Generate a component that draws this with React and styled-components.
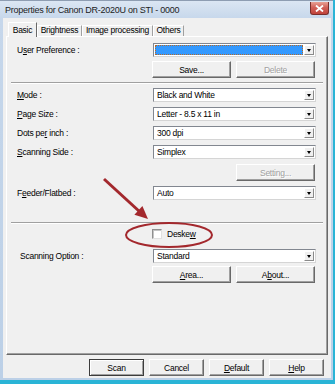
import React from 'react';
import styled, { createGlobalStyle } from 'styled-components';

const GlobalStyle = createGlobalStyle`
	html, body {
		margin: 0;
		padding: 0;
		background: #2ab4d6;
	}
	body {
		font-family: "Liberation Sans", Arial, sans-serif;
	}
`;

const Screen = styled.div`
	position: relative;
	width: 335px;
	height: 384px;
	overflow: hidden;
	background: #2ab4d6;
`;

const Window = styled.div`
	width: 333px;
	height: 380px;
	box-sizing: border-box;
	display: flex;
	flex-direction: column;
	background: linear-gradient(#dbe6f3, #c6d7eb 18px, #bcd0e7);
	border-top: 1px solid #8e9db2;
	padding: 0 2px 2px 3px;
`;

const TitleBar = styled.div`
	height: 17px;
	display: flex;
	align-items: center;
	margin-left: -1px;
	margin-right: -2px;
	padding-left: 3px;
`;

const Title = styled.span`
	flex: 1;
	font-size: 9px;
	letter-spacing: -0.25px;
	color: #1c1c1c;
	white-space: nowrap;
`;

const CloseButton = styled.div`
	width: 19px;
	height: 13px;
	margin: -2px 4px 0 0;
	border: 1px solid #7a2e2b;
	border-radius: 0 0 3px 3px;
	border-top: none;
	background: linear-gradient(#e8a195, #d2625a 45%, #c0433b);
	display: flex;
	align-items: center;
	justify-content: center;
	box-sizing: border-box;
`;

const Client = styled.div`
	flex: 1;
	display: flex;
	flex-direction: column;
	background: #f0f0f0;
`;

const TabStrip = styled.div`
	height: 18px;
	display: flex;
	align-items: flex-end;
	padding-left: 5px;
	position: relative;
	z-index: 1;
`;

const Tab = styled.div`
	box-sizing: border-box;
	width: ${p => p.$w}px;
	height: ${p => (p.$active ? 15 : 11)}px;
	margin-bottom: ${p => (p.$active ? -1 : 0)}px;
	background: #f0f0f0;
	border-top: 1px solid #fff;
	border-left: 1px solid #fff;
	border-right: 1px solid ${p => (p.$active ? '#696969' : '#a0a0a0')};
	font-size: 8.5px;
	letter-spacing: -0.25px;
	display: flex;
	align-items: ${p => (p.$active ? 'center' : 'flex-end')};
	justify-content: center;
	padding-bottom: 1px;
	color: #000;
	white-space: nowrap;
`;

const Panel = styled.div`
	height: 319px;
	box-sizing: border-box;
	margin: 0 3px;
	border-top: 1px solid #fff;
	border-left: 1px solid #fff;
	border-right: 1px solid #696969;
	border-bottom: 1px solid #696969;
	box-shadow: inset -1px -1px #a0a0a0;
	padding: 0 4px;
	display: flex;
	flex-direction: column;
`;

const Row = styled.div`
	display: grid;
	grid-template-columns: ${p => (p.$indent ? '133px' : '136px')} 163px;
	align-items: center;
	height: ${p => p.$h || 14}px;
	margin-top: ${p => p.$mt || 0}px;
	padding-left: ${p => (p.$indent ? 9 : 6)}px;
`;

const Label = styled.span`
	font-size: 8.5px;
	letter-spacing: -0.25px;
	color: #000;
	white-space: nowrap;
`;

const Combo = styled.div`
	height: 14px;
	box-sizing: border-box;
	display: flex;
	align-items: stretch;
	background: #fff;
	border: 1px solid;
	border-color: #828790 #d5d5d5 #d5d5d5 #828790;
	padding: 1px;
`;

const ComboText = styled.span`
	flex: 1;
	display: flex;
	align-items: center;
	padding-left: 2px;
	font-size: 8.5px;
	letter-spacing: -0.25px;
	color: #000;
	white-space: nowrap;
	overflow: hidden;
	box-sizing: border-box;
	background: ${p => (p.$selected ? '#3399ff' : 'transparent')};
	outline: ${p => (p.$selected ? '1px dotted #b46a2a' : 'none')};
	outline-offset: -1px;
	margin-right: ${p => (p.$selected ? 1 : 0)}px;
`;

const DropButton = styled.span`
	width: 10px;
	box-sizing: border-box;
	background: #f0f0f0;
	border: 1px solid;
	border-color: #fff #8a8a8a #8a8a8a #fff;
	display: flex;
	align-items: center;
	justify-content: center;
	&::after {
		content: '';
		border-left: 2.5px solid transparent;
		border-right: 2.5px solid transparent;
		border-top: 3px solid #000;
	}
`;

const ButtonPair = styled.div`
	display: grid;
	grid-template-columns: 79px 79px;
	gap: 5px;
	height: 17px;
	margin-left: -1px;
`;

const Button = styled.div`
	height: 17px;
	width: ${p => (p.$w ? `${p.$w}px` : 'auto')};
	box-sizing: border-box;
	background: #f0f0f0;
	border: 1px solid;
	border-color: ${p => (p.$default ? '#3c3c3c' : '#fff #696969 #696969 #fff')};
	box-shadow: ${p => (p.$default ? 'inset 1px 1px #fff, inset -1px -1px #a0a0a0' : 'inset -1px -1px #a0a0a0')};
	display: flex;
	align-items: center;
	justify-content: center;
	font-size: 8.5px;
	letter-spacing: -0.25px;
	color: ${p => (p.disabled ? '#a0a0a0' : '#000')};
	text-shadow: ${p => (p.disabled ? '1px 1px #fff' : 'none')};
	white-space: nowrap;
`;

const Separator = styled.div`
	height: 0;
	border-top: 1px solid #a0a0a0;
	border-bottom: 1px solid #fff;
	margin-top: ${p => p.$mt}px;
`;

const CheckRow = styled.div`
	display: flex;
	align-items: center;
	gap: 5px;
	height: 10px;
	margin-top: 5px;
	padding-left: 141px;
`;

const CheckBox = styled.span`
	width: 10px;
	height: 10px;
	box-sizing: border-box;
	background: #fff;
	border: 1px solid;
	border-color: #8f8f8f #e0e0e0 #e0e0e0 #8f8f8f;
	box-shadow: inset 1px 1px #c4c4c4;
`;

const Footer = styled.div`
	display: flex;
	justify-content: flex-end;
	gap: 5px;
	margin-top: 4px;
	padding-right: 7px;
`;

const Annotation = styled.svg`
	position: absolute;
	left: 95px;
	top: 170px;
	width: 125px;
	height: 82px;
	pointer-events: none;
`;

function ComboBox({ value, selected }) {
	return (
		<Combo>
			<ComboText $selected={selected}>{value}</ComboText>
			<DropButton />
		</Combo>
	);
}

export default function App() {
	return (
		<Screen>
			<GlobalStyle />
			<Window>
				<TitleBar>
					<Title>Properties for Canon DR-2020U on STI - 0000</Title>
					<CloseButton>
						<svg width="9" height="7" viewBox="0 0 9 7">
							<path d="M1 0.5 L8 6.5 M8 0.5 L1 6.5" stroke="#fff" strokeWidth="1.8" />
						</svg>
					</CloseButton>
				</TitleBar>
				<Client>
					<TabStrip>
						<Tab $active $w={29}>Basic</Tab>
						<Tab $w={45}>Brightness</Tab>
						<Tab $w={71}>Image processing</Tab>
						<Tab $w={31}>Others</Tab>
					</TabStrip>
					<Panel>
						<Row $mt={6}>
							<Label>U<u>s</u>er Preference :</Label>
							<ComboBox value="" selected />
						</Row>
						<Row $mt={4} $h={17}>
							<span />
							<ButtonPair>
								<Button>Save...</Button>
								<Button disabled>Delete</Button>
							</ButtonPair>
						</Row>
						<Separator $mt={4} />
						<Row $mt={4}>
							<Label><u>M</u>ode :</Label>
							<ComboBox value="Black and White" />
						</Row>
						<Row $mt={5}>
							<Label><u>P</u>age Size :</Label>
							<ComboBox value="Letter - 8.5 x 11 in" />
						</Row>
						<Row $mt={5}>
							<Label>Dots pe<u>r</u> inch :</Label>
							<ComboBox value="300 dpi" />
						</Row>
						<Row $mt={5}>
							<Label><u>S</u>canning Side :</Label>
							<ComboBox value="Simplex" />
						</Row>
						<Row $mt={5} $h={17}>
							<span />
							<ButtonPair>
								<span />
								<Button disabled>Setting...</Button>
							</ButtonPair>
						</Row>
						<Row $mt={5}>
							<Label>F<u>e</u>eder/Flatbed :</Label>
							<ComboBox value="Auto" />
						</Row>
						<Separator $mt={22} />
						<CheckRow>
							<CheckBox />
							<Label>Deske<u>w</u></Label>
						</CheckRow>
						<Row $mt={10} $indent>
							<Label>Scanning Option :</Label>
							<ComboBox value="Standard" />
						</Row>
						<Row $mt={3} $h={17}>
							<span />
							<ButtonPair>
								<Button><u>A</u>rea...</Button>
								<Button>A<u>b</u>out...</Button>
							</ButtonPair>
						</Row>
					</Panel>
					<Footer>
						<Button $w={55} $default>Scan</Button>
						<Button $w={55}>Cancel</Button>
						<Button $w={55}><u>D</u>efault</Button>
						<Button $w={55}><u>H</u>elp</Button>
					</Footer>
				</Client>
			</Window>
			<Annotation viewBox="95 170 125 82">
				<line x1="104" y1="179" x2="140" y2="212" stroke="#a3282d" strokeWidth="3" />
				<polygon points="148,219 134.4,214.7 142.4,205.9" fill="#a3282d" />
				<ellipse cx="169" cy="235" rx="43" ry="12" fill="none" stroke="#a3282d" strokeWidth="2" />
			</Annotation>
		</Screen>
	);
}
